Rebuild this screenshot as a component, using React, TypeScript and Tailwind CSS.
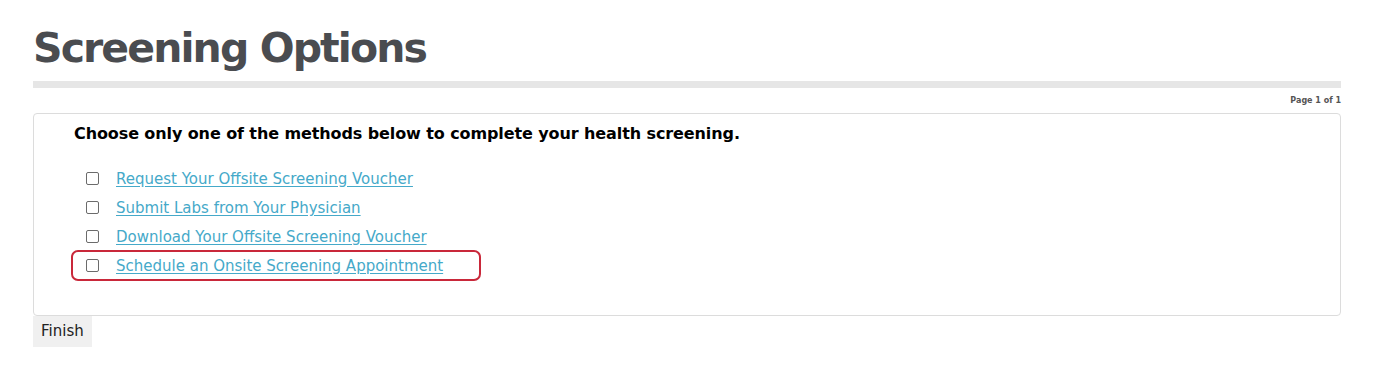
import React from "react";

const links = [
  "Request Your Offsite Screening Voucher",
  "Submit Labs from Your Physician",
  "Download Your Offsite Screening Voucher",
  "Schedule an Onsite Screening Appointment",
];

export default function App() {
  return (
    <div className="w-[1376px] h-[383px] bg-white px-[33px] pt-[20px]" style={{ fontFamily: '"DejaVu Sans", sans-serif' }}>
      <h1 className="text-[41px] leading-[56px] font-bold text-[#4a4c50] tracking-[-1.9px]">Screening Options</h1>
      <div className="mt-[5px] h-[7px] w-[1308px] bg-[#e6e6e6]"></div>
      <div className="w-[1308px] flex justify-end mt-[7px] h-[12px]">
        <span className="text-[8px] leading-[12px] font-semibold text-[#555]">Page 1 of 1</span>
      </div>
      <div className="w-[1308px] h-[203px] border border-[#dcdcdc] rounded-[4px] mt-[6px] pt-[9px] pl-[40px]">
        <p className="text-[16px] leading-[22px] font-bold text-black tracking-[-0.1px]">Choose only one of the methods below to complete your health screening.</p>
        <div className="mt-[19px] flex flex-col">
          {links.map((l, i) => (
            <div key={l} className={i === 3 ? "flex items-center h-[31px] w-[410px] -ml-[3px] pl-[13px] border-2 border-[#c9283a] rounded-[7px] -mt-[1px]" : "flex items-center h-[29px] pl-[12px]"}>
              <span className="w-[13px] h-[13px] border-[1.5px] border-[#6b6b6b] rounded-[2px] shrink-0"></span>
              <a className="ml-[17px] text-[15px] leading-[20px] text-[#45a9c9] underline underline-offset-2">{l}</a>
            </div>
          ))}
        </div>
      </div>
      <button className="h-[31px] px-[8px] bg-[#f0f0f0] text-[15px] text-[#222]">Finish</button>
    </div>
  );
}
